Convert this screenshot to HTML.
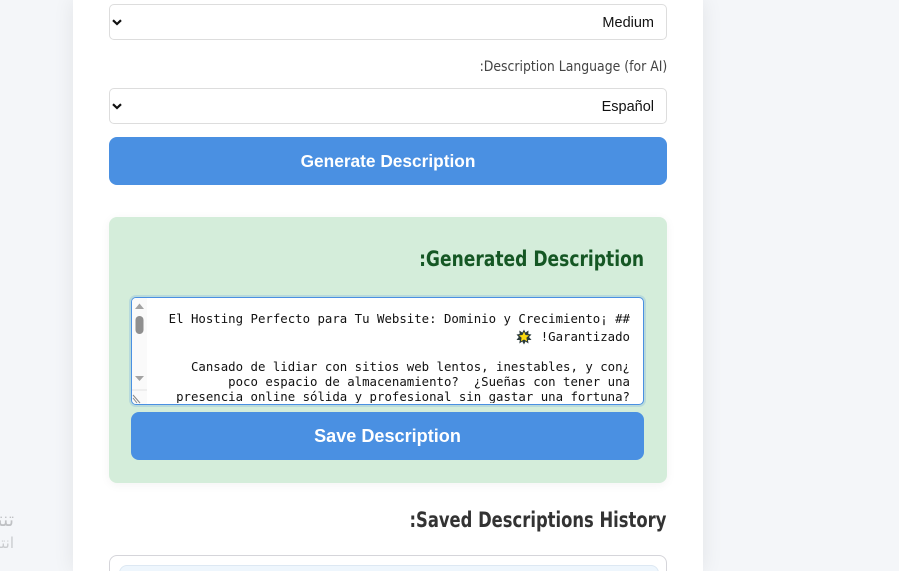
<!DOCTYPE html>
<html lang="en">
<head>
<meta charset="utf-8">
<title>Generated Description</title>
<style>
html,body{margin:0;padding:0;width:899px;height:571px;overflow:hidden;background:#f4f6f9;}
body{font-family:"Liberation Sans",sans-serif;}
#w{position:relative;width:899px;height:571px;overflow:hidden;}
.abs{position:absolute;white-space:pre;}
.card{position:absolute;left:73px;top:0;width:630px;height:571px;background:#fff;box-shadow:0 0 20px rgba(0,0,0,.08);}
.sel{position:absolute;left:109px;width:556px;height:34px;border:1px solid #ddd;border-radius:5px;background:#fff;}
.sel svg{position:absolute;left:2px;top:14px;}
.sel span{position:absolute;right:12px;top:10px;font-size:14.500px;line-height:17px;color:#111;white-space:pre;}
.btn{position:absolute;background:#4a90e2;border-radius:8px;color:#fff;font-weight:bold;text-align:center;}
.h{font-family:"DejaVu Sans",sans-serif;font-weight:bold;}
.mono{font-family:"DejaVu Sans Mono",monospace;font-size:12.360px;line-height:15px;color:#111;right:269px;}
</style>
</head>
<body>
<div id="w">
<div class="abs" style="right:885px;top:511px;font-size:19px;line-height:20px;color:#bfc1c4;font-family:'Liberation Sans','DejaVu Sans',sans-serif;">تنتن</div>
<div class="abs" style="right:885px;top:536px;font-size:15px;line-height:16px;color:#cacccf;font-family:'Liberation Sans','DejaVu Sans',sans-serif;">انتن</div>

<div class="card"></div>

<div class="sel" style="top:4px;">
<svg width="10" height="7" viewBox="0 0 10 7"><path d="M1 1.200L5 5L9 1.200" fill="none" stroke="#111" stroke-width="2.200"/></svg>
<span>Medium</span>
</div>

<div class="abs h" style="right:232px;top:58px;font-size:14.500px;line-height:18px;font-weight:normal;color:#444;transform:scaleX(.86);transform-origin:right center;">:Description Language (for AI)</div>

<div class="sel" style="top:88px;">
<svg width="10" height="7" viewBox="0 0 10 7"><path d="M1 1.200L5 5L9 1.200" fill="none" stroke="#111" stroke-width="2.200"/></svg>
<span>Español</span>
</div>

<div class="btn" style="left:109px;top:137px;width:558px;height:48px;font-size:17.300px;line-height:49px;">Generate Description</div>

<div style="position:absolute;left:109px;top:217px;width:558px;height:266px;background:#d4edda;border-radius:8px;box-shadow:0 2px 10px rgba(0,0,0,.05);"></div>

<div class="abs h" style="right:255px;top:246px;font-size:21px;line-height:27px;color:#155724;transform:scaleX(.815);transform-origin:right center;">:Generated Description</div>

<div style="position:absolute;left:129px;top:295px;width:517px;height:112px;border-radius:7px;background:rgba(74,144,226,.2);"></div>
<div style="position:absolute;left:131px;top:297px;width:511px;height:106px;border:1px solid #4a90e2;border-radius:5px;background:#fff;overflow:hidden;">
  <div style="position:absolute;left:0;top:0;width:15px;height:106px;background:#fafafa;"></div>
  <svg style="position:absolute;left:0;top:0;" width="15" height="106" viewBox="0 0 15 106">
    <path d="M3 11L7.500 5.500L12 11Z" fill="#a3a3a3"/>
    <rect x="3.500" y="18" width="8" height="18" rx="4" fill="#8f8f8f"/>
    <path d="M3 78L7.500 83L12 78Z" fill="#a3a3a3"/>
    <path d="M0 92H15" stroke="#e2e2e2" stroke-width="1"/>
    <path d="M1 97L8 105M1 100L5 105" stroke="#888" stroke-width="1" fill="none"/>
  </svg>
</div>

<div class="abs mono" style="top:312px;">El Hosting Perfecto para Tu Website: Dominio y Crecimiento¡ ##</div>
<div class="abs mono" style="top:330px;">!Garantizado</div>
<svg style="position:absolute;left:516px;top:329px;" width="16" height="16" viewBox="0 0 16 16">
  <path d="M8 0.500L9.500 3.500L12.500 1.500L12.300 5L15.500 5.500L13 8L15.500 11L12 11L12.500 14.500L9.500 12.500L8 15.500L6.300 12.500L3.300 14.500L3.800 11L0.500 11L2.800 8L0.500 5.500L3.700 5L3.300 1.500L6.300 3.500Z" fill="#2a3a3a"/>
  <path d="M8 2.800L9.500 6L13 6.400L10.400 8.800L11.100 12.300L8 10.500L4.900 12.300L5.600 8.800L3 6.400L6.500 6Z" fill="#fbd90f"/>
</svg>
<div class="abs mono" style="top:360px;">Cansado de lidiar con sitios web lentos, inestables, y con¿</div>
<div class="abs mono" style="top:375px;">poco espacio de almacenamiento?  ¿Sueñas con tener una</div>
<div class="abs mono" style="top:390px;height:13px;overflow:hidden;">presencia online sólida y profesional sin gastar una fortuna?</div>

<div class="btn" style="left:131px;top:412px;width:513px;height:48px;font-size:18.100px;line-height:48px;">Save Description</div>

<div class="abs h" style="right:233px;top:507px;font-size:21px;line-height:27px;color:#333;transform:scaleX(.78);transform-origin:right center;">:Saved Descriptions History</div>

<div style="position:absolute;left:109px;top:555px;width:556px;height:40px;border:1px solid #d5d5da;border-radius:8px;background:#fff;"></div>
<div style="position:absolute;left:119px;top:565px;width:538px;height:30px;border:1px solid #dde8f3;border-radius:8px;background:#eef6fd;"></div>
</div>
</body>
</html>
